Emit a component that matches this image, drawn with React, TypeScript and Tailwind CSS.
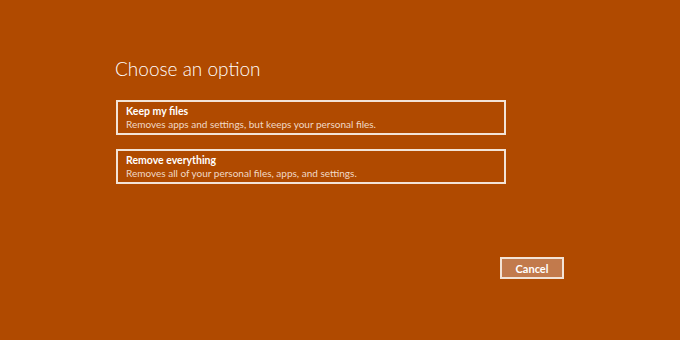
import React from 'react';

type OptionProps = {
    title: string;
    description: string;
};

const Option = ({ title, description }: OptionProps) => (
    <button className="w-[390px] h-[35px] border-2 border-[#f3e3d6] text-left px-[8px] flex flex-col justify-center text-white">
        <span className="text-[10.5px] font-bold leading-[13px]">{title}</span>
        <span className="text-[10px] leading-[13px] text-[#f1d9c6]">{description}</span>
    </button>
);

const App = () => {
    return (
        <div
            className="w-[680px] h-[340px] bg-[#b04a00] px-[116px] pt-[55px] flex flex-col"
            style={{ fontFamily: 'Lato, "Noto Sans", sans-serif' }}
        >
            <h1 className="text-[19px] font-light text-white leading-[27px] -ml-[1px]">Choose an option</h1>
            <div className="mt-[18px] flex flex-col gap-[14px]">
                <Option
                    title="Keep my files"
                    description="Removes apps and settings, but keeps your personal files."
                />
                <Option
                    title="Remove everything"
                    description="Removes all of your personal files, apps, and settings."
                />
            </div>
            <div className="mt-[73px] flex justify-end">
                <button className="w-[64px] h-[22px] border-2 border-[#f3e3d6] bg-[#c27a4c] text-white text-[11px] font-bold leading-none">
                    Cancel
                </button>
            </div>
        </div>
    );
};

export default App;
